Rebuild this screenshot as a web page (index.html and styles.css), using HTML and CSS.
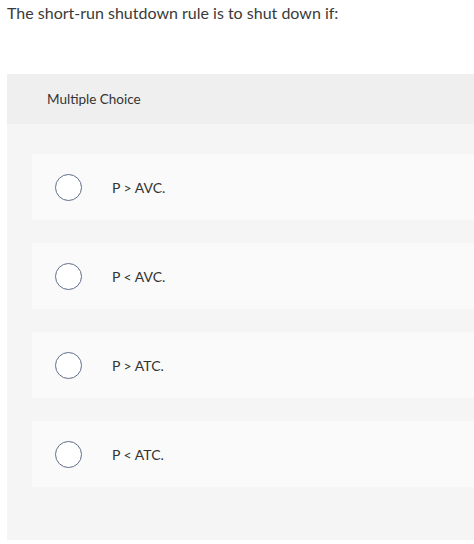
FILE: index.html
```html
<!DOCTYPE html>
<html>
<head>
<meta charset="utf-8">
<link rel="stylesheet" href="styles.css">
</head>
<body>
<p class="title">The short-run shutdown rule is to shut down if:</p>
<div class="panel">
  <div class="panel-head">Multiple Choice</div>
  <div class="options">
    <div class="option"><span class="radio"></span><span class="label">P &gt; AVC.</span></div>
    <div class="option"><span class="radio"></span><span class="label">P &lt; AVC.</span></div>
    <div class="option"><span class="radio"></span><span class="label">P &gt; ATC.</span></div>
    <div class="option"><span class="radio"></span><span class="label">P &lt; ATC.</span></div>
  </div>
</div>
</body>
</html>
```
FILE: styles.css
```css
html, body {
  margin: 0;
  padding: 0;
  background: #ffffff;
}
body {
  font-family: Lato, "Open Sans", "Liberation Sans", sans-serif;
  color: #333333;
}
.title {
  margin: 0;
  padding: 3px 7px 0;
  font-size: 16px;
  line-height: 20px;
  color: #3a3a3a;
}
.panel {
  margin: 51px 0 0 7px;
  height: 466px;
  background: #f5f5f5;
}
.panel-head {
  height: 50px;
  background: #efefef;
  padding-left: 40px;
  display: flex;
  align-items: center;
  font-size: 13.5px;
  color: #333333;
}
.options {
  padding: 30px 0 0 25px;
  display: flex;
  flex-direction: column;
  gap: 23px;
}
.option {
  height: 66px;
  background: #fafafa;
  display: flex;
  align-items: center;
  padding-left: 23px;
}
.radio {
  width: 25px;
  height: 25px;
  border: 1.25px solid #5f6e88;
  border-radius: 50%;
  background: #ffffff;
  flex: none;
}
.label {
  margin-left: 30px;
  font-size: 14px;
  color: #333333;
}
```
